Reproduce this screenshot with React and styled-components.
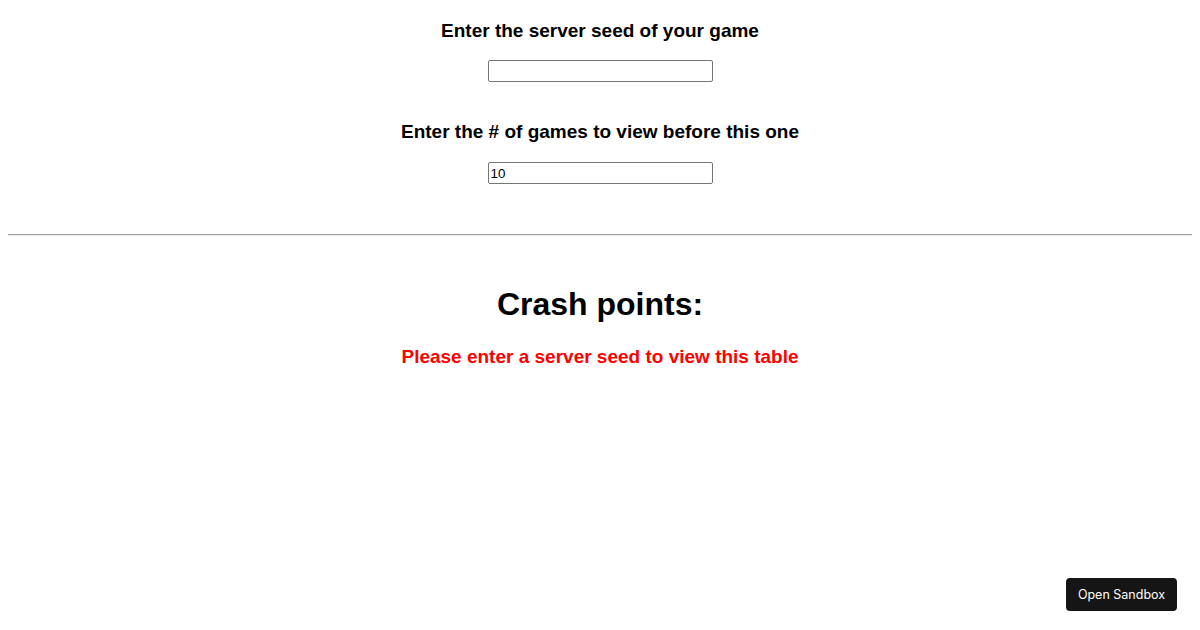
import React from "react";
import styled, { createGlobalStyle } from "styled-components";

const Global = createGlobalStyle`
  html, body { margin: 0; padding: 0; background: #fff; }
  body { font-family: "Liberation Sans", Arial, sans-serif; color: #000; }
`;

const Page = styled.div`
  display: flex;
  flex-direction: column;
  align-items: center;
  padding: 0 8px;
`;

const Label = styled.h3`
  margin: ${(p) => p.$top}px 0 0;
  font-size: 19px;
  line-height: 22px;
  font-weight: bold;
  color: ${(p) => p.$color || "#000"};
`;

const Field = styled.input`
  box-sizing: border-box;
  margin-top: ${(p) => p.$top}px;
  width: 225px;
  height: 22px;
  padding: 0 2px;
  border: 1px solid #767676;
  border-radius: 2px;
  font-family: "Liberation Sans", Arial, sans-serif;
  font-size: 13.33px;
  color: #000;
  background: #fff;
  outline: none;
`;

const Rule = styled.hr`
  align-self: stretch;
  margin: 50px 0 0;
  height: 0;
  border: none;
  border-top: 1px solid #9a9a9a;
  border-bottom: 1px solid #eeeeee;
`;

const Title = styled.h1`
  margin: 50px 0 0;
  font-size: 32px;
  line-height: 37px;
  font-weight: bold;
`;

const SandboxButton = styled.a`
  position: fixed;
  right: 23px;
  bottom: 19px;
  display: flex;
  align-items: center;
  justify-content: center;
  width: 111px;
  height: 33px;
  box-sizing: border-box;
  background: #151515;
  border-radius: 4px;
  color: #fff;
  font-family: Inter, "Liberation Sans", sans-serif;
  font-size: 12.5px;
  text-decoration: none;
`;

export default function App() {
  return (
    <>
      <Global />
      <Page>
        <Label $top={20}>Enter the server seed of your game</Label>
        <Field $top={18} type="text" defaultValue="" />
        <Label $top={39}>Enter the # of games to view before this one</Label>
        <Field $top={19} type="text" defaultValue="10" />
        <Rule />
        <Title>Crash points:</Title>
        <Label $top={23} $color="#ff0000">
          Please enter a server seed to view this table
        </Label>
      </Page>
      <SandboxButton href="#">Open Sandbox</SandboxButton>
    </>
  );
}
